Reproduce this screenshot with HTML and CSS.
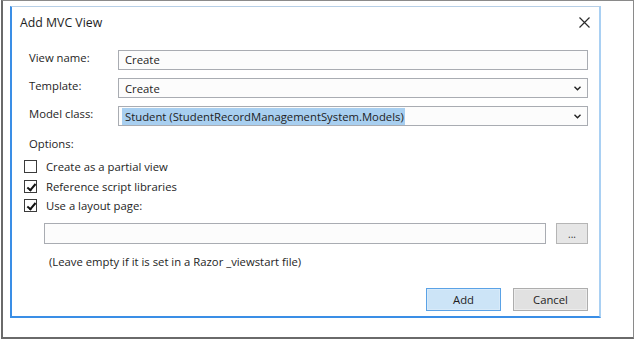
FILE: index.html
```html
<!DOCTYPE html>
<html lang="en">
<head>
  <meta charset="UTF-8">
  <title>Add MVC View</title>
  <link rel="stylesheet" href="styles.css">
</head>
<body>
  <div class="frame">
    <div class="dialog">
      <div class="title-bar">
        <span class="title">Add MVC View</span>
        <svg class="close" width="11" height="11" viewBox="0 0 11 11">
          <path d="M0.5 0.5 L10.5 10.5 M10.5 0.5 L0.5 10.5" stroke="#2b2b2b" stroke-width="1.2" fill="none"/>
        </svg>
      </div>

      <div class="fields">
        <label class="field-label">View name:</label>
        <div class="input">Create</div>

        <label class="field-label">Template:</label>
        <div class="input select">
          <span>Create</span>
          <svg class="chevron" width="7" height="5" viewBox="0 0 7 5"><path d="M0.5 0.8 L3.5 3.8 L6.5 0.8" stroke="#222" stroke-width="1.4" fill="none"/></svg>
        </div>

        <label class="field-label">Model class:</label>
        <div class="input select">
          <span class="selected">Student (StudentRecordManagementSystem.Models)</span>
          <svg class="chevron" width="7" height="5" viewBox="0 0 7 5"><path d="M0.5 0.8 L3.5 3.8 L6.5 0.8" stroke="#222" stroke-width="1.4" fill="none"/></svg>
        </div>
      </div>

      <div class="options-label">Options:</div>
      <div class="checks">
        <div class="check"><span class="box"></span>Create as a partial view</div>
        <div class="check"><span class="box checked"></span>Reference script libraries</div>
        <div class="check"><span class="box checked"></span>Use a layout page:</div>
      </div>

      <div class="layout-row">
        <div class="input layout-input"></div>
        <button class="browse">...</button>
      </div>
      <div class="hint">(Leave empty if it is set in a Razor _viewstart file)</div>

      <div class="actions">
        <button class="btn primary">Add</button>
        <button class="btn">Cancel</button>
      </div>
    </div>
  </div>
</body>
</html>
```

FILE: styles.css
```css
* { margin: 0; padding: 0; box-sizing: border-box; }
body { font-family: 'Open Sans', 'Liberation Sans', sans-serif; font-size: 11.3px; color: #1e1e1e; background: #fff; }

.frame { margin-left: 1px; width: 633px; height: 339px; border-left: 2px solid #6a6a6a; border-top: 1px solid #8a8a8a; border-right: 1px solid #8a8a8a; border-bottom: 2px solid #6a6a6a; padding: 5px 0 0 7px; }
.dialog { width: 591px; height: 312px; background: #fff; border-left: 2px solid #3a8ee6; border-bottom: 2px solid #3a8ee6; border-top: 1px solid #b7cfe6; border-right: 2px solid #a9d0f3; }

.title-bar { display: flex; justify-content: space-between; align-items: center; height: 28px; padding: 2px 9px 0 8px; }
.title { font-size: 12.3px; }

.fields { display: grid; grid-template-columns: 89px 470px; row-gap: 8px; padding-left: 17px; margin-top: 15px; }
.field-label { line-height: 16px; }
.input { height: 20px; border: 1px solid #a9acb2; background: #fcfcfc; padding-left: 6px; line-height: 17px; }
.select { display: flex; justify-content: space-between; align-items: center; padding-right: 6px; }
.selected { background: #a8cff0; line-height: 17px; margin-left: -3px; padding: 0 1px 0 3px; }
.chevron { display: block; }

.options-label { padding-left: 17px; margin-top: 10px; line-height: 16px; }
.checks { display: flex; flex-direction: column; gap: 6.5px; padding-left: 12px; margin-top: 8px; }
.check { display: flex; align-items: center; gap: 9px; height: 13px; line-height: 13px; }
.box { width: 13px; height: 13px; border: 1px solid #3b3b3b; background: #fff; position: relative; }
.box.checked::after { content: ''; position: absolute; left: 4px; top: 1px; width: 3px; height: 7px; border: solid #111; border-width: 0 2px 2px 0; transform: rotate(40deg); }

.layout-row { display: flex; gap: 10px; padding-left: 32px; margin-top: 11px; }
.layout-input { width: 502px; height: 21px; }
.browse { width: 32px; height: 21px; border: 1px solid #b5b5b5; background: #e6e6e6; font-family: inherit; font-size: 10px; color: #333; line-height: 12px; }
.hint { padding-left: 37px; margin-top: 10px; line-height: 16px; }

.actions { display: flex; justify-content: flex-end; gap: 12px; padding-right: 11px; margin-top: 18px; }
.btn { width: 75px; height: 23px; font-family: inherit; font-size: 11.3px; color: #1e1e1e; border: 1px solid #adadad; background: #e1e1e1; box-shadow: inset 0 0 0 1px #ececec; }
.btn.primary { border-color: #5aa2e6; background: #cce4f7; box-shadow: inset 0 0 0 1px #d8eaf9; }
```
